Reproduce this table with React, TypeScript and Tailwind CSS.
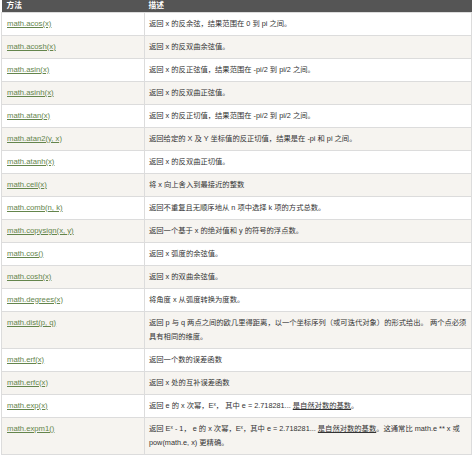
import React from 'react';

interface Row {
  name: string;
  desc: React.ReactNode;
}

const rows: Row[] = [
  { name: 'math.acos(x)', desc: '返回 x 的反余弦，结果范围在 0 到 pi 之间。' },
  { name: 'math.acosh(x)', desc: '返回 x 的反双曲余弦值。' },
  { name: 'math.asin(x)', desc: '返回 x 的反正弦值，结果范围在 -pi/2 到 pi/2 之间。' },
  { name: 'math.asinh(x)', desc: '返回 x 的反双曲正弦值。' },
  { name: 'math.atan(x)', desc: '返回 x 的反正切值，结果范围在 -pi/2 到 pi/2 之间。' },
  { name: 'math.atan2(y, x)', desc: '返回给定的 X 及 Y 坐标值的反正切值，结果是在 -pi 和 pi 之间。' },
  { name: 'math.atanh(x)', desc: '返回 x 的反双曲正切值。' },
  { name: 'math.ceil(x)', desc: '将 x 向上舍入到最接近的整数' },
  { name: 'math.comb(n, k)', desc: '返回不重复且无顺序地从 n 项中选择 k 项的方式总数。' },
  { name: 'math.copysign(x, y)', desc: '返回一个基于 x 的绝对值和 y 的符号的浮点数。' },
  { name: 'math.cos()', desc: '返回 x 弧度的余弦值。' },
  { name: 'math.cosh(x)', desc: '返回 x 的双曲余弦值。' },
  { name: 'math.degrees(x)', desc: '将角度 x 从弧度转换为度数。' },
  {
    name: 'math.dist(p, q)',
    desc: '返回 p 与 q 两点之间的欧几里得距离，以一个坐标序列（或可迭代对象）的形式给出。 两个点必须具有相同的维度。',
  },
  { name: 'math.erf(x)', desc: '返回一个数的误差函数' },
  { name: 'math.erfc(x)', desc: '返回 x 处的互补误差函数' },
  {
    name: 'math.exp(x)',
    desc: (
      <>
        返回 e 的 x 次幂，Eˣ， 其中 e = 2.718281... <span className="underline">是自然对数的基数</span>。
      </>
    ),
  },
  {
    name: 'math.expm1()',
    desc: (
      <>
        返回 Eˣ - 1， e 的 x 次幂，Eˣ，其中 e = 2.718281... <span className="underline">是自然对数的基数</span>。这通常比 math.e ** x 或 pow(math.e, x) 更精确。
      </>
    ),
  },
];

export default function App() {
  return (
    <div
      className="w-[474px] h-[461px] overflow-hidden bg-white pl-px"
      style={{ fontFamily: '"Liberation Sans", "Noto Sans CJK SC", sans-serif' }}
    >
      <table className="w-[471px] border-collapse text-[7.7px] text-[#333] table-fixed">
        <colgroup>
          <col className="w-[143px]" />
          <col />
        </colgroup>
        <thead>
          <tr className="bg-[#555] text-white h-[12px]">
            <th className="text-left font-bold px-[5px] py-0 leading-[11px]">方法</th>
            <th className="text-left font-bold px-[4px] py-0 leading-[11px]">描述</th>
          </tr>
        </thead>
        <tbody>
          {rows.map((r, i) => (
            <tr key={r.name} className={i % 2 === 1 ? 'bg-[#f6f4f0]' : 'bg-white'}>
              <td className="border border-[#dcdcdc] px-[5px] py-[4px] leading-[14px] align-top">
                <a href="#" className="text-[#64854c] underline">
                  {r.name}
                </a>
              </td>
              <td className="border border-[#dcdcdc] pl-[4px] pr-[2px] py-[4px] leading-[14px] align-top text-[7.3px]">
                {r.desc}
              </td>
            </tr>
          ))}
        </tbody>
      </table>
    </div>
  );
}
